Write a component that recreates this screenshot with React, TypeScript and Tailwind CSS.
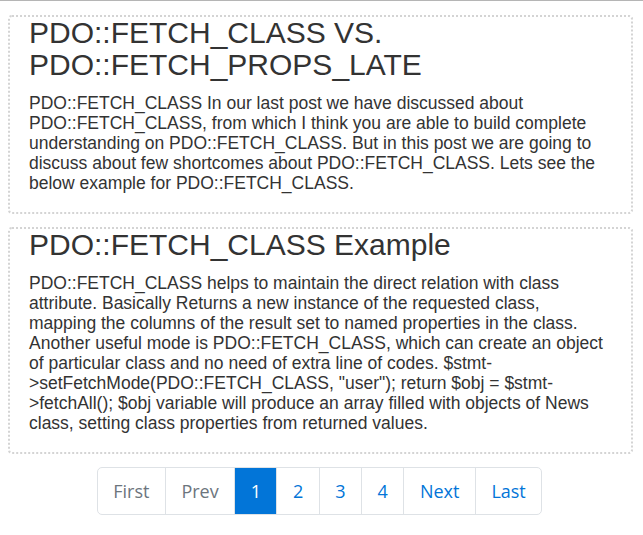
import React from "react";

const posts = [
    {
        title: "PDO::FETCH_CLASS VS. PDO::FETCH_PROPS_LATE",
        body: "PDO::FETCH_CLASS In our last post we have discussed about PDO::FETCH_CLASS, from which I think you are able to build complete understanding on PDO::FETCH_CLASS. But in this post we are going to discuss about few shortcomes about PDO::FETCH_CLASS. Lets see the below example for PDO::FETCH_CLASS.",
    },
    {
        title: "PDO::FETCH_CLASS Example",
        body: 'PDO::FETCH_CLASS helps to maintain the direct relation with class attribute. Basically Returns a new instance of the requested class, mapping the columns of the result set to named properties in the class. Another useful mode is PDO::FETCH_CLASS, which can create an object of particular class and no need of extra line of codes. $stmt->setFetchMode(PDO::FETCH_CLASS, "user"); return $obj = $stmt->fetchAll(); $obj variable will produce an array filled with objects of News class, setting class properties from returned values.',
    },
];

const pages = ["First", "Prev", "1", "2", "3", "4", "Next", "Last"];

const App: React.FC = () => {
    return (
        <div className="min-h-[535px] bg-white border-t border-[#b5b5b5] pt-[14px] font-['Liberation_Sans',Arial,sans-serif] text-[#333]">
            {posts.map((post, i) => (
                <div
                    key={i}
                    className="ml-2 mr-[10px] mb-[13px] border-2 border-dotted border-[#d4d4d4] rounded-[4px] pl-[19px] pr-[24px] pb-[19px]"
                >
                    <h2 className="text-[30px] leading-[32px] mb-[12px]">{post.title}</h2>
                    <p className="text-[17.5px] leading-[20px]">{post.body}</p>
                </div>
            ))}

            {/* Pagination */}
            <div className="flex justify-center">
                <ul className="flex border border-[#dee2e6] rounded-[5px] overflow-hidden ml-[-4px] font-['Open_Sans','Noto_Sans',sans-serif] text-[18px]">
                    {pages.map((p, i) => {
                        const active = p === "1";
                        const muted = p === "First" || p === "Prev";
                        return (
                            <li
                                key={p}
                                className={`h-[46px] flex items-center justify-center px-[15.5px] ${
                                    i > 0 ? "border-l border-[#dee2e6]" : ""
                                } ${
                                    active
                                        ? "bg-[#0275d8] text-white"
                                        : muted
                                        ? "text-[#6c757d]"
                                        : "text-[#0275d8]"
                                }`}
                            >
                                {p}
                            </li>
                        );
                    })}
                </ul>
            </div>
        </div>
    );
};

export default App;
